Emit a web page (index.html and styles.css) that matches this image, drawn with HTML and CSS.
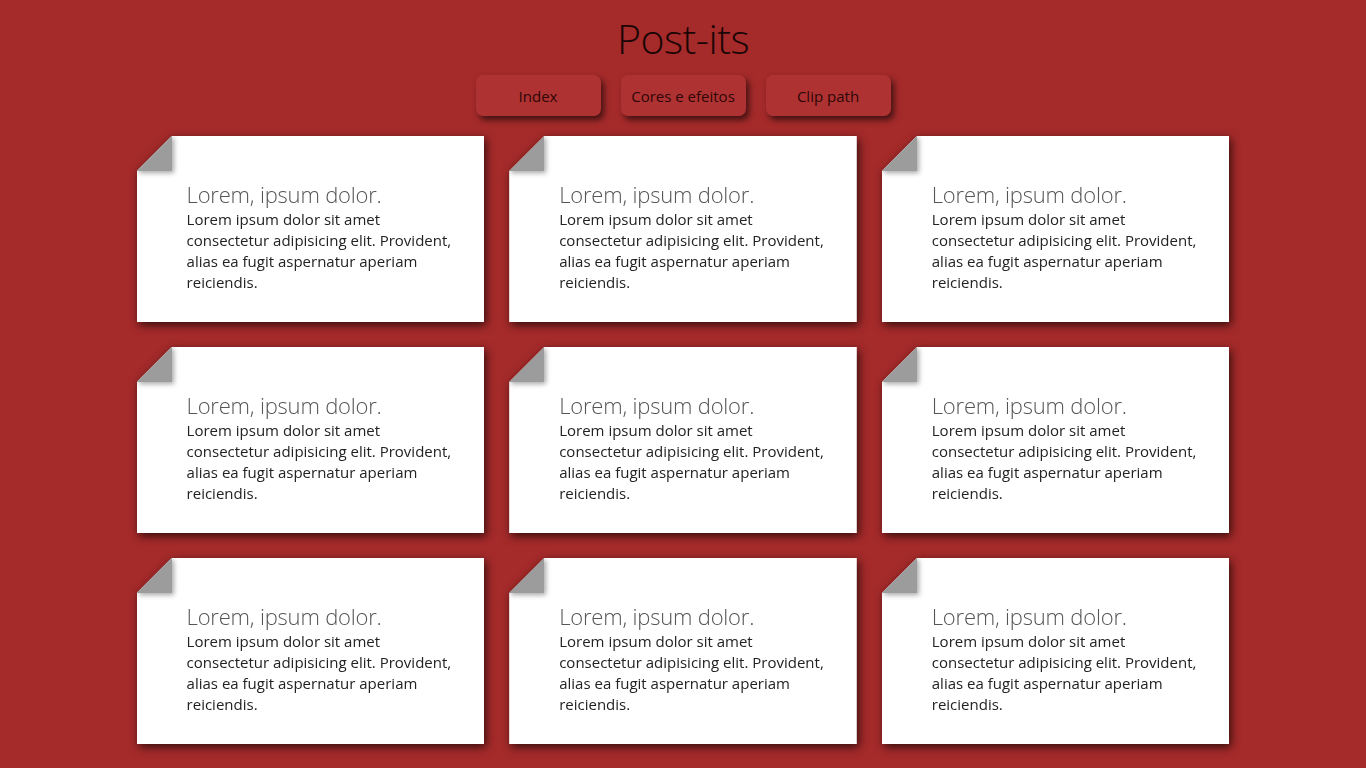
FILE: index.html
```html
<!DOCTYPE html>
<html lang="pt">
<head>
<meta charset="utf-8">
<title>Post-its</title>
<link rel="stylesheet" href="styles.css">
</head>
<body>
<header class="top">
  <h1 class="title">Post-its</h1>
  <nav class="menu">
    <a class="btn" href="#">Index</a>
    <a class="btn" href="#">Cores e efeitos</a>
    <a class="btn" href="#">Clip path</a>
  </nav>
</header>
<main class="board">
  <div class="note"><div class="paper"><h2>Lorem, ipsum dolor.</h2><p>Lorem ipsum dolor sit amet consectetur adipisicing elit. Provident, alias ea fugit aspernatur aperiam reiciendis.</p></div></div>
  <div class="note"><div class="paper"><h2>Lorem, ipsum dolor.</h2><p>Lorem ipsum dolor sit amet consectetur adipisicing elit. Provident, alias ea fugit aspernatur aperiam reiciendis.</p></div></div>
  <div class="note"><div class="paper"><h2>Lorem, ipsum dolor.</h2><p>Lorem ipsum dolor sit amet consectetur adipisicing elit. Provident, alias ea fugit aspernatur aperiam reiciendis.</p></div></div>
  <div class="note"><div class="paper"><h2>Lorem, ipsum dolor.</h2><p>Lorem ipsum dolor sit amet consectetur adipisicing elit. Provident, alias ea fugit aspernatur aperiam reiciendis.</p></div></div>
  <div class="note"><div class="paper"><h2>Lorem, ipsum dolor.</h2><p>Lorem ipsum dolor sit amet consectetur adipisicing elit. Provident, alias ea fugit aspernatur aperiam reiciendis.</p></div></div>
  <div class="note"><div class="paper"><h2>Lorem, ipsum dolor.</h2><p>Lorem ipsum dolor sit amet consectetur adipisicing elit. Provident, alias ea fugit aspernatur aperiam reiciendis.</p></div></div>
  <div class="note"><div class="paper"><h2>Lorem, ipsum dolor.</h2><p>Lorem ipsum dolor sit amet consectetur adipisicing elit. Provident, alias ea fugit aspernatur aperiam reiciendis.</p></div></div>
  <div class="note"><div class="paper"><h2>Lorem, ipsum dolor.</h2><p>Lorem ipsum dolor sit amet consectetur adipisicing elit. Provident, alias ea fugit aspernatur aperiam reiciendis.</p></div></div>
  <div class="note"><div class="paper"><h2>Lorem, ipsum dolor.</h2><p>Lorem ipsum dolor sit amet consectetur adipisicing elit. Provident, alias ea fugit aspernatur aperiam reiciendis.</p></div></div>
</main>
</body>
</html>
```
FILE: styles.css
```css
* { box-sizing: border-box; }

html, body {
  margin: 0;
  padding: 0;
}

body {
  background: #a52a2a;
  font-family: "Open Sans", "Noto Sans", sans-serif;
  color: #222;
  height: 768px;
  overflow: hidden;
}

.top {
  display: flex;
  flex-direction: column;
  align-items: center;
  padding-top: 12px;
}

.title {
  margin: 0;
  font-size: 41px;
  font-weight: 300;
  line-height: 52px;
  color: #1a0505;
  letter-spacing: -0.5px;
}

.menu {
  display: flex;
  gap: 20px;
  margin-top: 11px;
}

.btn {
  width: 125px;
  height: 41px;
  display: flex;
  align-items: center;
  justify-content: center;
  background: #ae3232;
  border-radius: 7px;
  box-shadow: 3px 4px 6px rgba(0, 0, 0, 0.6);
  color: #2e0606;
  text-decoration: none;
  font-size: 15px;
  white-space: nowrap;
}

.board {
  width: 80%;
  margin: 20px auto 0;
  display: grid;
  grid-template-columns: repeat(3, 1fr);
  gap: 25px;
}

.note {
  height: 186px;
  filter: drop-shadow(2px 3px 5px rgba(0, 0, 0, 0.7));
}

.paper {
  position: relative;
  height: 100%;
  background: #fff;
  clip-path: polygon(35px 0, 100% 0, 100% 100%, 0 100%, 0 35px);
  padding: 43px 22px 0 50px;
}

.paper::before {
  content: "";
  position: absolute;
  top: 0;
  left: 0;
  width: 35px;
  height: 35px;
  background: #9c9c9c;
  box-shadow: 2px 2px 5px rgba(0, 0, 0, 0.35);
}

.paper h2 {
  margin: 0;
  font-size: 22px;
  font-weight: 300;
  line-height: 30px;
  color: #555;
  letter-spacing: -0.2px;
}

.paper p {
  margin: 0;
  font-size: 15px;
  line-height: 21px;
  color: #222;
}
```
